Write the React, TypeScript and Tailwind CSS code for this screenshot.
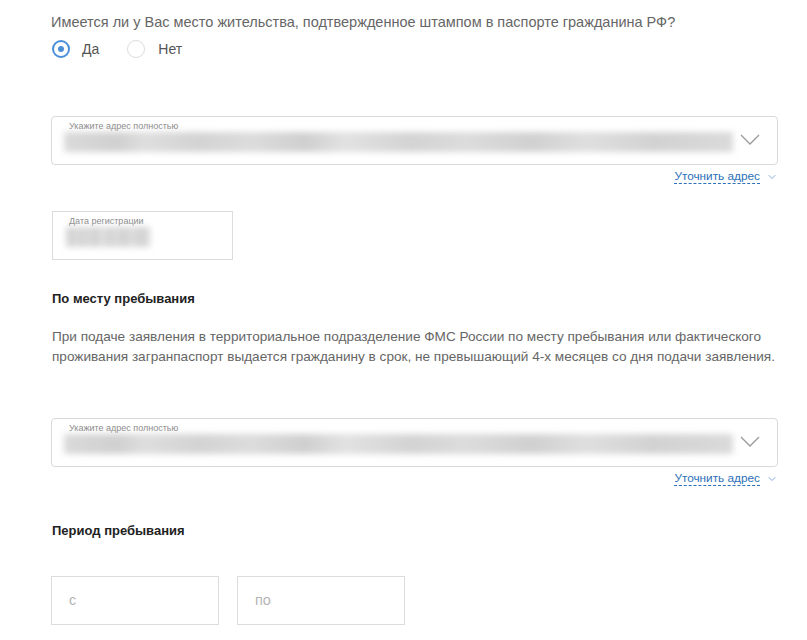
import { ChevronDown } from 'lucide-react';

const Blur = ({ w }: { w: string }) => (
  <div
    className={`${w} h-[20px] blur-[3px] bg-[linear-gradient(90deg,#dadada_0%,#d0d0d0_8%,#dedede_12%,#d3d3d3_20%,#dcdcdc_28%,#cfcfcf_36%,#e2e2e2_42%,#d3d3d3_52%,#dcdcdc_60%,#d0d0d0_70%,#dfdfdf_78%,#d2d2d2_88%,#dadada_100%)]`}
  />
);

const AddressField = () => (
  <div>
    <div className="relative h-[49px] rounded-[4px] border border-[#d9d9d9] bg-white">
      <div className="pl-[17px] pt-[3px] text-[9px] leading-[12px] text-[#8a8a8a]">Укажите адрес полностью</div>
      <div className="pl-[12px] pr-[44px]">
        <Blur w="w-full" />
      </div>
      <svg className="absolute right-[17px] top-[17px]" width="20" height="12" viewBox="0 0 20 12" fill="none">
        <path d="M1 1l9 9 9-9" stroke="#9a9a9a" strokeWidth="1.3" />
      </svg>
    </div>
    <div className="mt-[4px] flex justify-end items-center pr-[0px] text-[11.8px] leading-[18px]">
      <span className="text-[#2d6fb8] border-b border-dashed border-[#2d6fb8] leading-[14px]">Уточнить адрес</span>
      <ChevronDown className="ml-[6px] text-[#5b8fd0]" size={12} strokeWidth={1.5} />
    </div>
  </div>
);

const DateBox = ({ ph }: { ph: string }) => (
  <div className="w-[168px] h-[49px] border border-[#dcdcdc] bg-white flex items-center pl-[17px] text-[14.5px] text-[#b5b5b5]">
    {ph}
  </div>
);

export default function App() {
  return (
    <div className="min-h-screen bg-white font-['Liberation_Sans',Arial,sans-serif] pl-[51px] pr-[29px] pt-[12px]">
      <div className="text-[14.5px] leading-[20px] text-[#666] whitespace-nowrap">
        Имеется ли у Вас место жительства, подтвержденное штампом в паспорте гражданина РФ?
      </div>
      <div className="mt-[7px] flex items-center h-[20px] text-[14px] text-[#555]">
        <span className="ml-[1px] w-[18px] h-[18px] rounded-full border-2 border-[#4a90d9] flex items-center justify-center">
          <span className="w-[6px] h-[6px] rounded-full bg-[#4a90d9]" />
        </span>
        <span className="ml-[12px]">Да</span>
        <span className="ml-[28px] w-[18px] h-[18px] rounded-full border border-[#dcdcdc]" />
        <span className="ml-[13px]">Нет</span>
      </div>

      <div className="mt-[57px]">
        <AddressField />
      </div>

      <div className="mt-[27px] w-[181px] h-[49px] border border-[#dcdcdc] ml-[1px]">
        <div className="pl-[16px] pt-[3px] text-[9px] leading-[12px] text-[#8a8a8a]">Дата регистрации</div>
        <div className="pl-[13px]">
          <Blur w="w-[84px]" />
        </div>
      </div>

      <div className="mt-[30px] text-[13px] leading-[18px] font-bold text-[#222] ml-[1px]">По месту пребывания</div>

      <div className="mt-[19px] text-[13.6px] leading-[20px] text-[#666] ml-[1px] whitespace-nowrap">
        При подаче заявления в территориальное подразделение ФМС России по месту пребывания или фактического
        <br />
        проживания загранпаспорт выдается гражданину в срок, не превышающий 4-х месяцев со дня подачи заявления.
      </div>

      <div className="mt-[51px]">
        <AddressField />
      </div>

      <div className="mt-[36px] text-[13px] leading-[18px] font-bold text-[#222] ml-[1px]">Период пребывания</div>

      <div className="mt-[36px] flex gap-[18px]">
        <DateBox ph="с" />
        <DateBox ph="по" />
      </div>
    </div>
  );
}
